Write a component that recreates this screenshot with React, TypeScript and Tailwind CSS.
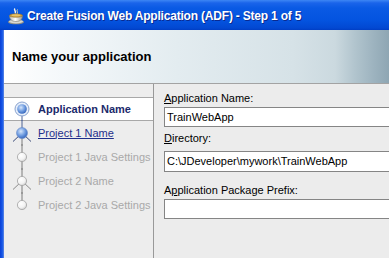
import React from "react";

type Step = { label: string; state: "current" | "link" | "disabled"; branch?: boolean };

const steps: Step[] = [
  { label: "Application Name", state: "current" },
  { label: "Project 1 Name", state: "link", branch: true },
  { label: "Project 1 Java Settings", state: "disabled" },
  { label: "Project 2 Name", state: "disabled", branch: true },
  { label: "Project 2 Java Settings", state: "disabled" },
];

function CupIcon() {
  return (
    <svg width="18" height="18" viewBox="0 0 18 18">
      <defs>
        <linearGradient id="cupBody" x1="0" y1="0" x2="1" y2="0">
          <stop offset="0" stopColor="#b8b8b0" />
          <stop offset="0.45" stopColor="#ffffff" />
          <stop offset="1" stopColor="#9a9a92" />
        </linearGradient>
      </defs>
      <path d="M8 1.5 C6 3 10 4 8 6.5" stroke="#f4f4ee" strokeWidth="1.4" fill="none" />
      <path d="M10.5 2.5 C9 4 11.5 5 10 7" stroke="#e8d9a0" strokeWidth="1" fill="none" />
      <ellipse cx="9" cy="15" rx="8" ry="2.3" fill="#8d8d86" />
      <ellipse cx="9" cy="14.6" rx="7" ry="1.8" fill="#d8d8d0" />
      <path d="M2.5 8.5 L15.5 8.5 C15.5 12.5 13 14.5 9 14.5 C5 14.5 2.5 12.5 2.5 8.5 Z" fill="url(#cupBody)" stroke="#7a7a72" strokeWidth="0.6" />
      <ellipse cx="9" cy="8.5" rx="6.5" ry="1.8" fill="#c89a3c" stroke="#8a6a2a" strokeWidth="0.5" />
      <ellipse cx="9" cy="8.3" rx="4.5" ry="1" fill="#e8c36a" />
    </svg>
  );
}

function TrainIcon({ step, index, h }: { step: Step; index: number; h: number }) {
  const cx = 18;
  const cy = h / 2;
  const last = index === steps.length - 1;
  const topColor = index === 1 ? "#4d6294" : "#7c7c7c";
  const bottomColor = index === 0 ? "#4d6294" : "#7c7c7c";
  const id = `g${index}`;
  return (
    <svg width="34" height={h} className="shrink-0 overflow-visible">
      <defs>
        <radialGradient id={`${id}b`} cx="0.4" cy="0.35" r="0.7">
          <stop offset="0" stopColor="#d6e6fb" />
          <stop offset="0.55" stopColor="#6f9ce0" />
          <stop offset="1" stopColor="#2e5fb8" />
        </radialGradient>
        <radialGradient id={`${id}w`} cx="0.4" cy="0.35" r="0.7">
          <stop offset="0" stopColor="#ffffff" />
          <stop offset="0.6" stopColor="#f2f2f2" />
          <stop offset="1" stopColor="#c8c8c8" />
        </radialGradient>
      </defs>
      {index > 0 && <line x1={cx} y1={-1} x2={cx} y2={cy} stroke={topColor} strokeWidth="1" />}
      {!last && <line x1={cx} y1={cy} x2={cx} y2={h + 1} stroke={bottomColor} strokeWidth="1" />}
      {step.branch && (
        <g stroke={step.state === "link" ? "#3a4a78" : "#8a8a8a"} strokeWidth="1">
          <line x1={cx} y1={cy} x2={cx - 9} y2={cy + 8.5} />
          <line x1={cx} y1={cy} x2={cx + 9} y2={cy + 8.5} />
        </g>
      )}
      {step.state === "current" && (
        <>
          <circle cx={cx} cy={cy} r="7" fill="#e6eefa" stroke="#89a3cf" strokeWidth="1" />
          <circle cx={cx} cy={cy} r="4.8" fill={`url(#${id}b)`} />
        </>
      )}
      {step.state === "link" && <circle cx={cx} cy={cy} r="5.5" fill={`url(#${id}b)`} stroke="#6a8cc8" strokeWidth="0.6" />}
      {step.state === "disabled" && <circle cx={cx} cy={cy} r="4.6" fill={`url(#${id}w)`} stroke="#a3a3a3" strokeWidth="0.8" />}
    </svg>
  );
}

export default function App() {
  return (
    <div className="w-[389px] h-[258px] overflow-hidden flex flex-col font-['Liberation_Sans',Arial,sans-serif] text-[11px] leading-[13px] bg-[#ececec]">
      {/* Title bar */}
      <div className="h-[30px] shrink-0 flex items-center bg-[linear-gradient(to_bottom,#3d86f4_0px,#1a64ea_3px,#0a5ae4_8px,#0454e0_20px,#0248d2_28px,#003ec4_30px)]">
        <div className="ml-[7px] mt-[1px] flex items-center">
          <CupIcon />
        </div>
        <div className="ml-[2px] mt-[1px] text-white font-bold text-[12px] leading-[14px] tracking-[-0.2px] whitespace-nowrap [text-shadow:1px_1px_0_#0a2a90]">
          Create Fusion Web Application (ADF) - Step 1 of 5
        </div>
      </div>
      <div className="flex flex-1 min-h-0">
        {/* left window frame */}
        <div className="w-[4px] shrink-0 bg-[linear-gradient(to_right,#0a3fd6_0px,#1455e6_2px,#2a66e8_3px,#6d8fe0_4px)]" />
        <div className="flex flex-col flex-1 min-w-0">
          {/* Header */}
          <div className="h-[54px] shrink-0 border-b border-[#a3a3a3] flex items-center pl-[8px] bg-[linear-gradient(to_right,#ffffff_0%,#f4f8fa_15%,#e3ecf0_45%,#d6e2e7_75%,#cbd9df_86%,#b2c5ce_91%,#9db3bf_96%,#8ea6b3_100%)]">
            <div className="font-bold text-[13px] leading-[16px] text-black mt-[1px]">Name your application</div>
          </div>
          <div className="flex flex-1 min-h-0">
            {/* Train navigation */}
            <div className="w-[150px] shrink-0 border-r border-[#999999] bg-[#ededed] pt-[13px]">
              {steps.map((s, i) => {
                const current = s.state === "current";
                return (
                  <div
                    key={s.label}
                    className={
                      current
                        ? "h-[24px] flex items-center bg-white border-y border-[#a8a8a8]"
                        : "h-[24px] flex items-center"
                    }
                  >
                    <TrainIcon step={s} index={i} h={current ? 22 : 24} />
                    <span
                      className={
                        current
                          ? "font-bold text-[#1b2a6b] whitespace-nowrap"
                          : s.state === "link"
                          ? "text-[#1f2f8c] underline whitespace-nowrap"
                          : "text-[#a9a9a9] whitespace-nowrap"
                      }
                    >
                      {s.label}
                    </span>
                  </div>
                );
              })}
            </div>
            {/* Form */}
            <div className="flex-1 min-w-0 overflow-hidden pl-[10px] pt-[8px] bg-[#ececec] text-black">
              <div className="whitespace-nowrap">
                <span className="underline">A</span>pplication Name:
              </div>
              <div className="mt-[2px] w-[240px] h-[20px] border border-[#858585] bg-white pl-[2px] flex items-center whitespace-nowrap">
                TrainWebApp
              </div>
              <div className="mt-[5px] whitespace-nowrap">
                <span className="underline">D</span>irectory:
              </div>
              <div className="mt-[6px] w-[240px] h-[21px] border border-[#858585] bg-white pl-[2px] flex items-center whitespace-nowrap">
                C:\JDeveloper\mywork\TrainWebApp
              </div>
              <div className="mt-[12px] whitespace-nowrap">
                A<span className="underline">p</span>plication Package Prefix:
              </div>
              <div className="mt-[2px] w-[240px] h-[20px] border border-[#858585] bg-white" />
            </div>
          </div>
        </div>
      </div>
    </div>
  );
}
